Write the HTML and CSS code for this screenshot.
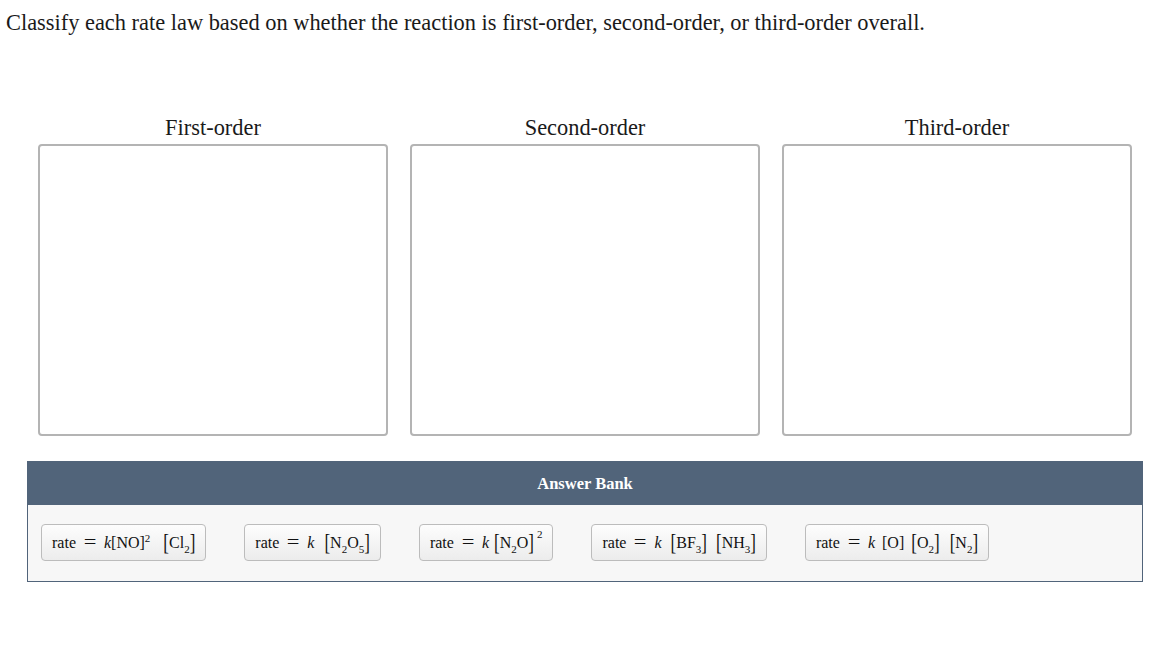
FILE: index.html
```html
<!DOCTYPE html>
<html>
<head>
<meta charset="utf-8">
<link rel="stylesheet" href="styles.css">
</head>
<body>
<p class="prompt">Classify each rate law based on whether the reaction is first-order, second-order, or third-order overall.</p>
<div class="bins">
  <div class="bin">
    <div class="bin-title">First-order</div>
    <div class="bin-box"></div>
  </div>
  <div class="bin">
    <div class="bin-title">Second-order</div>
    <div class="bin-box"></div>
  </div>
  <div class="bin">
    <div class="bin-title">Third-order</div>
    <div class="bin-box"></div>
  </div>
</div>
<div class="bank">
  <div class="bank-head">Answer Bank</div>
  <div class="bank-body">
    <div class="chip"><span class="expr">rate<span class="eq">=</span><i>k</i>[NO]<sup>2</sup><span class="grp sp-xl"><span class="br">[</span>Cl<sub>2</sub><span class="br">]</span></span></span></div>
    <div class="chip"><span class="expr">rate<span class="eq">=</span><i>k</i><span class="grp sp-ml"><span class="br">[</span>N<sub>2</sub>O<sub>5</sub><span class="br">]</span></span></span></div>
    <div class="chip"><span class="expr">rate<span class="eq">=</span><i>k</i><span class="grp sp-s"><span class="br">[</span>N<sub>2</sub>O<span class="br">]</span></span><sup class="hi">2</sup></span></div>
    <div class="chip"><span class="expr">rate<span class="eq">=</span><i>k</i><span class="grp sp-l"><span class="br">[</span>BF<sub>3</sub><span class="br">]</span></span><span class="grp sp-l"><span class="br">[</span>NH<sub>3</sub><span class="br">]</span></span></span></div>
    <div class="chip"><span class="expr">rate<span class="eq">=</span><i>k</i><span class="grp sp-m">[O]</span><span class="grp sp-m"><span class="br">[</span>O<sub>2</sub><span class="br">]</span></span><span class="grp sp-ml"><span class="br">[</span>N<sub>2</sub><span class="br">]</span></span></span></div>
  </div>
</div>
</body>
</html>
```
FILE: styles.css
```css
html, body {
  margin: 0;
  padding: 0;
  background: #ffffff;
  font-family: "Liberation Serif", "Times New Roman", serif;
  color: #1a1a1a;
}
.prompt {
  margin: 0;
  padding: 10px 0 0 6px;
  font-size: 22.4px;
  line-height: 26px;
}
.bins {
  display: flex;
  gap: 22px;
  padding: 79px 0 0 38px;
}
.bin {
  width: 350px;
  display: flex;
  flex-direction: column;
  align-items: center;
}
.bin-title {
  font-size: 22.4px;
  line-height: 26px;
  margin-bottom: 3px;
}
.bin-box {
  width: 350px;
  height: 292px;
  box-sizing: border-box;
  border: 2px solid #b4b4b4;
  border-radius: 4px;
  background: #fff;
}
.bank {
  margin: 25px 0 0 27px;
  width: 1116px;
  box-sizing: border-box;
  border: 1px solid #51647a;
}
.bank-head {
  background: #51647a;
  color: #fff;
  font-weight: bold;
  font-size: 16.5px;
  height: 43px;
  line-height: 43px;
  text-align: center;
}
.bank-body {
  background: #f7f7f7;
  display: flex;
  gap: 38px;
  padding: 19px 0 20px 13px;
}
.chip {
  height: 37px;
  box-sizing: border-box;
  padding: 0 10px;
  border: 1px solid #bcbcbc;
  border-radius: 4px;
  background: linear-gradient(#fdfdfd, #ececec);
  display: flex;
  align-items: center;
  color: #111;
}
.expr {
  font-size: 16px;
  line-height: 20px;
  white-space: nowrap;
}
.eq {
  display: inline-block;
  width: 16px;
  margin: 0 6px;
  text-align: center;
  font-size: 18px;
  transform: scaleX(1.25);
}
.expr sub, .expr sup {
  font-size: 11px;
  line-height: 0;
}
.expr sub {
  vertical-align: -5px;
}
.expr sup {
  vertical-align: 6px;
}
.expr sup.hi {
  vertical-align: 10px;
  margin-left: 3px;
}
.grp {
  display: inline-block;
}
.sp-s { margin-left: 5px; }
.sp-m { margin-left: 7px; }
.sp-ml { margin-left: 10px; }
.sp-l { margin-left: 9px; }
.sp-xl { margin-left: 13px; }
.br {
  display: inline-block;
  transform: scaleY(1.35);
  font-size: 17px;
}
```
